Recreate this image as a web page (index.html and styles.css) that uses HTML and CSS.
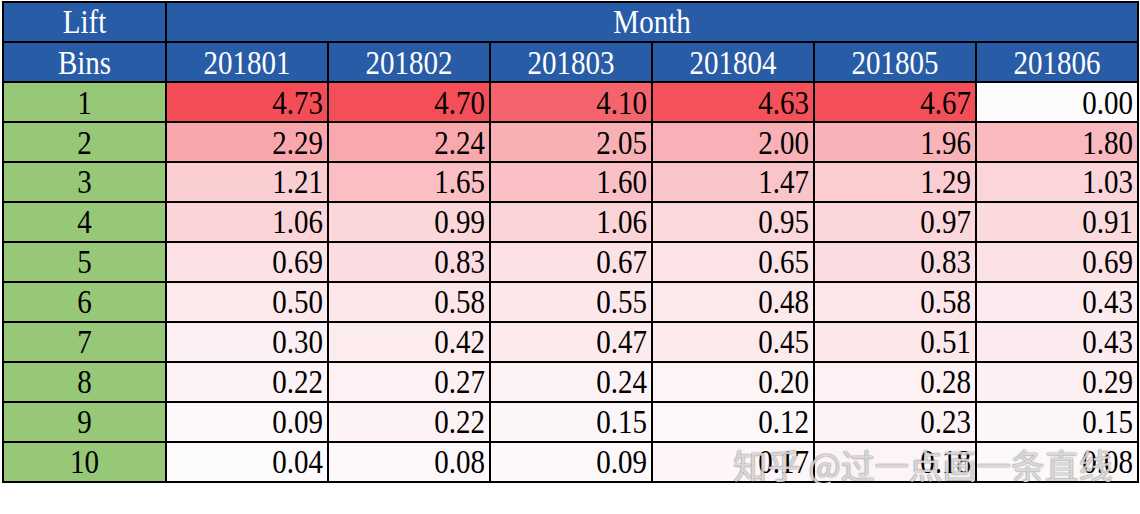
FILE: index.html
```html
<!DOCTYPE html>
<html>
<head>
<meta charset="utf-8">
<link rel="stylesheet" href="styles.css">
</head>
<body>
<div class="wrap">
<table class="lift">
<colgroup><col class="c0"><col class="cm"><col class="cm"><col class="cm"><col class="cm"><col class="cm"><col class="cm"></colgroup>
<thead>
<tr class="h1"><th class="hd"><span class="v">Lift</span></th><th class="hd" colspan="6"><span class="v">Month</span></th></tr>
<tr><th class="hd"><span class="v">Bins</span></th><th class="hd"><span class="v">201801</span></th><th class="hd"><span class="v">201802</span></th><th class="hd"><span class="v">201803</span></th><th class="hd"><span class="v">201804</span></th><th class="hd"><span class="v">201805</span></th><th class="hd"><span class="v">201806</span></th></tr>
</thead>
<tbody>
<tr><td class="bin"><span class="v">1</span></td><td class="num" style="background:rgb(244,77,87)"><span class="v">4.73</span></td><td class="num" style="background:rgb(244,78,88)"><span class="v">4.70</span></td><td class="num" style="background:rgb(245,100,109)"><span class="v">4.10</span></td><td class="num" style="background:rgb(244,81,90)"><span class="v">4.63</span></td><td class="num" style="background:rgb(244,79,89)"><span class="v">4.67</span></td><td class="num" style="background:rgb(253,251,253)"><span class="v">0.00</span></td></tr>
<tr><td class="bin"><span class="v">2</span></td><td class="num" style="background:rgb(249,167,173)"><span class="v">2.29</span></td><td class="num" style="background:rgb(249,169,174)"><span class="v">2.24</span></td><td class="num" style="background:rgb(249,176,181)"><span class="v">2.05</span></td><td class="num" style="background:rgb(249,177,183)"><span class="v">2.00</span></td><td class="num" style="background:rgb(249,179,184)"><span class="v">1.96</span></td><td class="num" style="background:rgb(250,185,190)"><span class="v">1.80</span></td></tr>
<tr><td class="bin"><span class="v">3</span></td><td class="num" style="background:rgb(251,206,210)"><span class="v">1.21</span></td><td class="num" style="background:rgb(250,190,195)"><span class="v">1.65</span></td><td class="num" style="background:rgb(250,192,197)"><span class="v">1.60</span></td><td class="num" style="background:rgb(250,197,201)"><span class="v">1.47</span></td><td class="num" style="background:rgb(251,204,208)"><span class="v">1.29</span></td><td class="num" style="background:rgb(251,213,217)"><span class="v">1.03</span></td></tr>
<tr><td class="bin"><span class="v">4</span></td><td class="num" style="background:rgb(251,212,216)"><span class="v">1.06</span></td><td class="num" style="background:rgb(251,215,218)"><span class="v">0.99</span></td><td class="num" style="background:rgb(251,212,216)"><span class="v">1.06</span></td><td class="num" style="background:rgb(251,216,220)"><span class="v">0.95</span></td><td class="num" style="background:rgb(251,215,219)"><span class="v">0.97</span></td><td class="num" style="background:rgb(251,218,221)"><span class="v">0.91</span></td></tr>
<tr><td class="bin"><span class="v">5</span></td><td class="num" style="background:rgb(252,226,229)"><span class="v">0.69</span></td><td class="num" style="background:rgb(251,220,224)"><span class="v">0.83</span></td><td class="num" style="background:rgb(252,226,229)"><span class="v">0.67</span></td><td class="num" style="background:rgb(252,227,230)"><span class="v">0.65</span></td><td class="num" style="background:rgb(251,220,224)"><span class="v">0.83</span></td><td class="num" style="background:rgb(252,226,229)"><span class="v">0.69</span></td></tr>
<tr><td class="bin"><span class="v">6</span></td><td class="num" style="background:rgb(252,233,235)"><span class="v">0.50</span></td><td class="num" style="background:rgb(252,230,233)"><span class="v">0.58</span></td><td class="num" style="background:rgb(252,231,234)"><span class="v">0.55</span></td><td class="num" style="background:rgb(252,233,236)"><span class="v">0.48</span></td><td class="num" style="background:rgb(252,230,233)"><span class="v">0.58</span></td><td class="num" style="background:rgb(252,235,238)"><span class="v">0.43</span></td></tr>
<tr><td class="bin"><span class="v">7</span></td><td class="num" style="background:rgb(252,240,242)"><span class="v">0.30</span></td><td class="num" style="background:rgb(252,236,238)"><span class="v">0.42</span></td><td class="num" style="background:rgb(252,234,236)"><span class="v">0.47</span></td><td class="num" style="background:rgb(252,234,237)"><span class="v">0.45</span></td><td class="num" style="background:rgb(252,232,235)"><span class="v">0.51</span></td><td class="num" style="background:rgb(252,235,238)"><span class="v">0.43</span></td></tr>
<tr><td class="bin"><span class="v">8</span></td><td class="num" style="background:rgb(253,243,245)"><span class="v">0.22</span></td><td class="num" style="background:rgb(253,241,243)"><span class="v">0.27</span></td><td class="num" style="background:rgb(253,242,245)"><span class="v">0.24</span></td><td class="num" style="background:rgb(253,244,246)"><span class="v">0.20</span></td><td class="num" style="background:rgb(253,241,243)"><span class="v">0.28</span></td><td class="num" style="background:rgb(253,240,243)"><span class="v">0.29</span></td></tr>
<tr><td class="bin"><span class="v">9</span></td><td class="num" style="background:rgb(253,248,250)"><span class="v">0.09</span></td><td class="num" style="background:rgb(253,243,245)"><span class="v">0.22</span></td><td class="num" style="background:rgb(253,246,248)"><span class="v">0.15</span></td><td class="num" style="background:rgb(253,247,249)"><span class="v">0.12</span></td><td class="num" style="background:rgb(253,243,245)"><span class="v">0.23</span></td><td class="num" style="background:rgb(253,246,248)"><span class="v">0.15</span></td></tr>
<tr><td class="bin"><span class="v">10</span></td><td class="num" style="background:rgb(253,250,252)"><span class="v">0.04</span></td><td class="num" style="background:rgb(253,248,250)"><span class="v">0.08</span></td><td class="num" style="background:rgb(253,248,250)"><span class="v">0.09</span></td><td class="num" style="background:rgb(253,245,247)"><span class="v">0.17</span></td><td class="num" style="background:rgb(253,244,247)"><span class="v">0.18</span></td><td class="num" style="background:rgb(253,248,250)"><span class="v">0.08</span></td></tr>
</tbody>
</table>
<div class="watermark">知乎 @过一点画一条直线</div>
</div>
</body>
</html>
```
FILE: styles.css
```css
html, body {
  margin: 0;
  padding: 0;
  background: #ffffff;
}
.wrap {
  position: relative;
  padding: 1px 0 0 2px;
}
.lift {
  border-collapse: collapse;
  table-layout: fixed;
  width: 1135px;
  font-family: "Liberation Serif", "Times New Roman", serif;
  font-size: 29px;
  color: #000;
}
.c0 { width: 163px; }
.cm { width: 162px; }
.lift th, .lift td {
  border: 2px solid #000;
  height: 38px;
  padding: 0 4px 0 0;
  line-height: 38px;
  overflow: hidden;
  white-space: nowrap;
}
.hd {
  background: #285ca6;
  color: #fff;
  font-weight: normal;
  text-align: center;
  padding: 0;
}
.lift th.hd { padding: 0; }
.bin {
  background: #97c878;
  text-align: center;
}
.lift td.bin { padding: 0; }
.num {
  text-align: right;
}
.v {
  display: inline-block;
  transform: scaleY(1.15);
}
.watermark {
  position: absolute;
  left: 733px;
  top: 443px;
  font-family: "Noto Sans CJK SC", sans-serif;
  font-size: 34px;
  line-height: 44px;
  color: rgba(255, 255, 255, 0.75);
  text-shadow: 0 0 1px rgba(0, 0, 0, 0.5), 0 0 2px rgba(0, 0, 0, 0.3);
  white-space: nowrap;
  pointer-events: none;
}
```
